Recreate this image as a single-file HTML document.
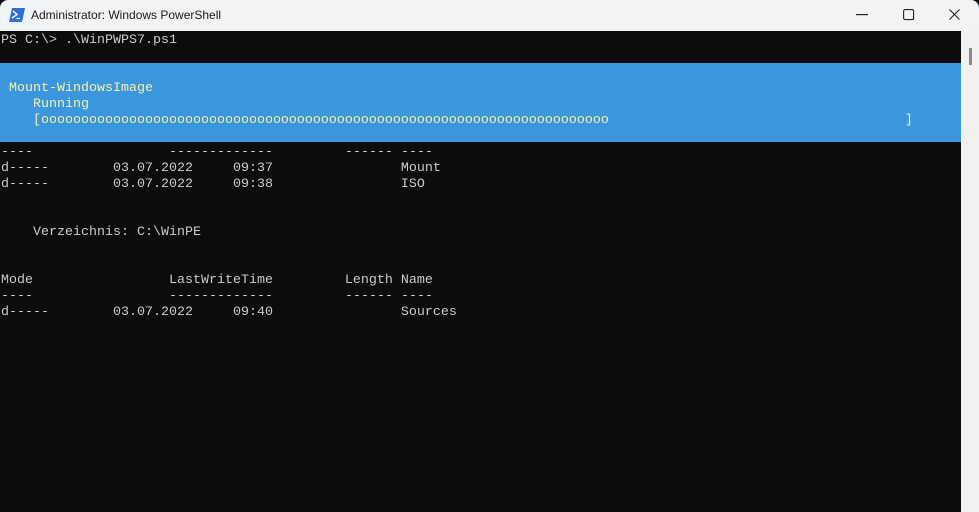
<!DOCTYPE html>
<html><head><style>
html,body{margin:0;padding:0;width:979px;height:512px;overflow:hidden;background:#0c0c0c}
.title{position:absolute;left:0;top:0;width:979px;height:31px;background:#eff4f9;border-radius:8px 8px 0 0}
.title span{position:absolute;left:31px;top:8px;font:12px "Liberation Sans",sans-serif;color:#1a1a1a}
.con{position:absolute;left:0;top:31px;width:961px;height:481px;background:#0c0c0c}
.sb{position:absolute;left:961px;top:31px;width:18px;height:481px;background:#f0f0f0}
.thumb{position:absolute;left:969px;top:48px;width:3px;height:17px;background:#8a8a8a}
.blue{position:absolute;left:0;top:63px;width:961px;height:79px;background:#3a96dd}
.l{position:absolute;left:1px;font:13.33px/16px "Liberation Mono",monospace;color:#cccccc;white-space:pre}
.y{color:#f9f1a5}
</style></head><body>
<div class="title">
<svg style="position:absolute;left:9px;top:8px" width="16" height="14" viewBox="0 0 16 14"><path d="M3 0H16L13 14H0Z" fill="#2f6fd0"/><path d="M4 3L8 6.5L3 10" stroke="#fff" stroke-width="1.4" fill="none"/><path d="M7.5 10.5H11" stroke="#fff" stroke-width="1.2"/></svg>
<span>Administrator: Windows PowerShell</span>
<svg style="position:absolute;left:856px;top:14px" width="12" height="2"><rect width="12" height="1.2" fill="#222"/></svg>
<svg style="position:absolute;left:903px;top:9px" width="12" height="12"><rect x="0.6" y="0.6" width="10" height="10" rx="1.5" fill="none" stroke="#222" stroke-width="1.1"/></svg>
<svg style="position:absolute;left:949px;top:9px" width="12" height="12"><path d="M0.5 0.5L10.5 10.5M10.5 0.5L0.5 10.5" stroke="#222" stroke-width="1.1"/></svg>
</div>
<div class="con"></div>
<div class="sb"></div><div class="thumb"></div>
<div class="blue"></div>
<div class="l" style="top:33px">PS C:\&gt; .\WinPWPS7.ps1</div>
<div class="l y" style="top:81px"> Mount-WindowsImage</div>
<div class="l y" style="top:97px">    Running</div>
<div class="l y" style="top:113px">    [ooooooooooooooooooooooooooooooooooooooooooooooooooooooooooooooooooooooo                                     ]</div>
<div class="l" style="top:145px">----                 -------------         ------ ----</div>
<div class="l" style="top:161px">d-----        03.07.2022     09:37                Mount</div>
<div class="l" style="top:177px">d-----        03.07.2022     09:38                ISO</div>
<div class="l" style="top:225px">    Verzeichnis: C:\WinPE</div>
<div class="l" style="top:273px">Mode                 LastWriteTime         Length Name</div>
<div class="l" style="top:289px">----                 -------------         ------ ----</div>
<div class="l" style="top:305px">d-----        03.07.2022     09:40                Sources</div>
</body></html>
